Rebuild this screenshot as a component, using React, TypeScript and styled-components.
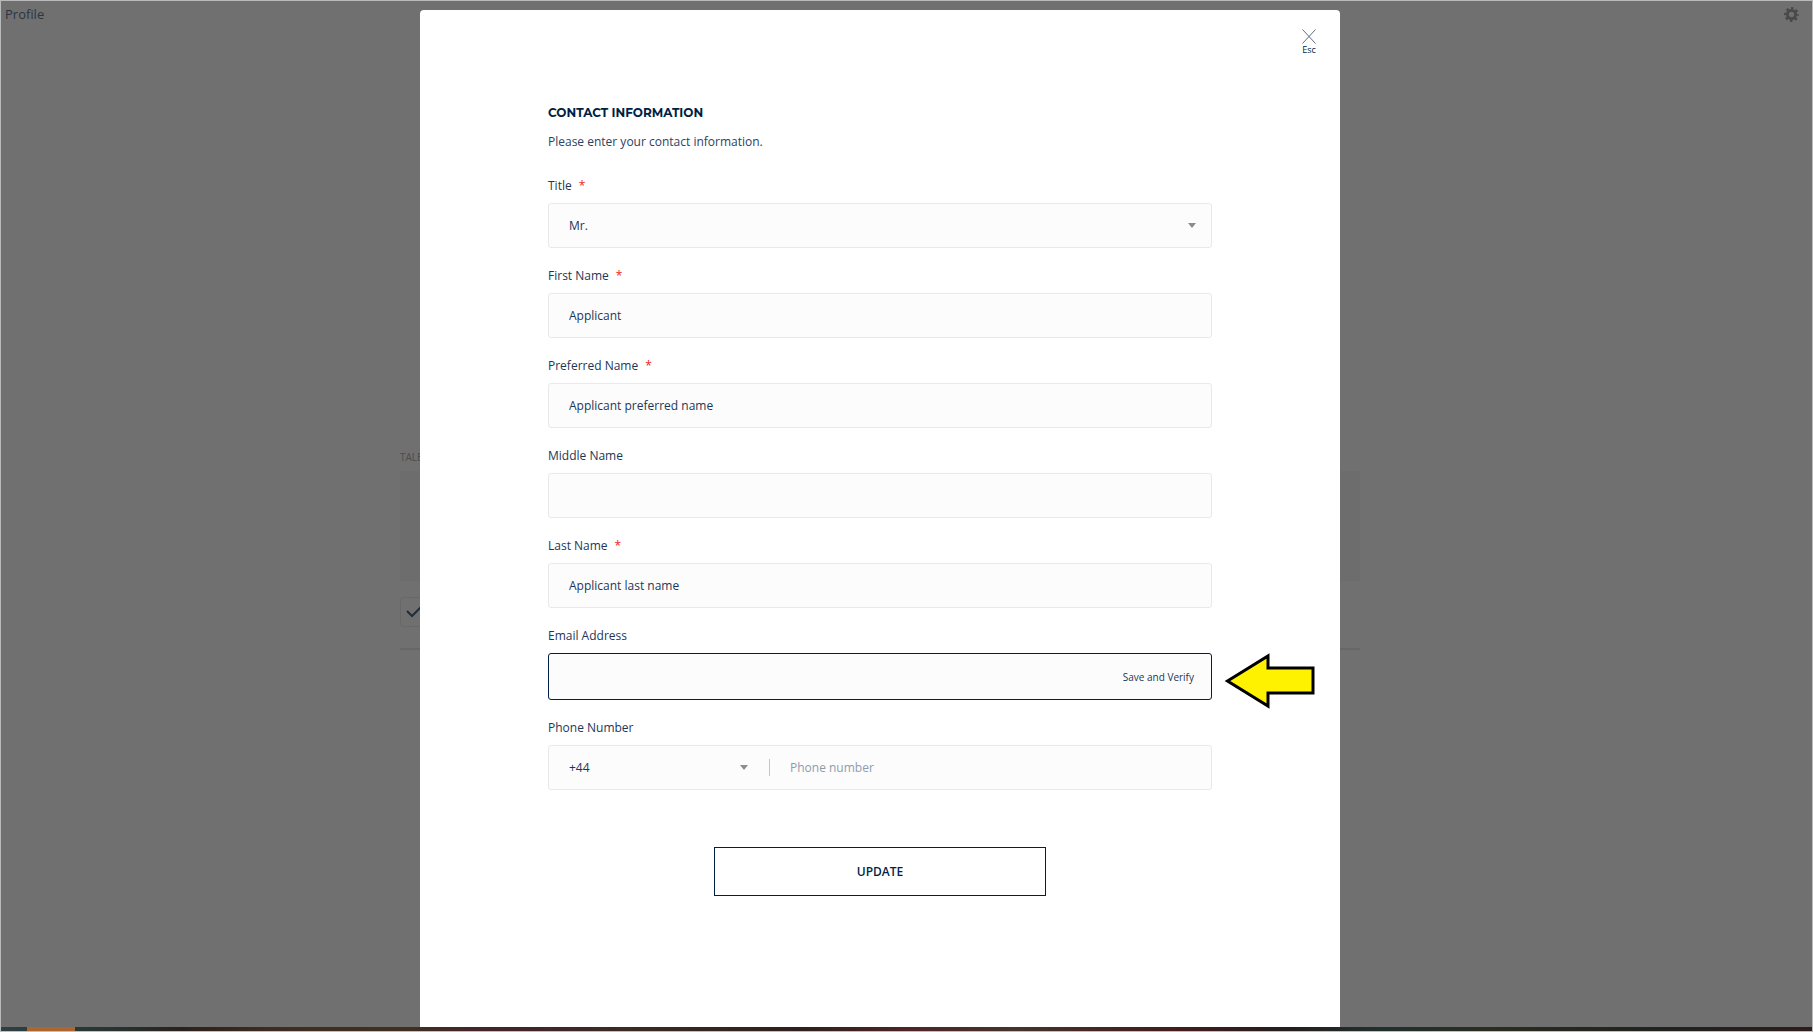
import React from "react";
import styled, { createGlobalStyle } from "styled-components";

const navy = "#001f47";

const GlobalStyle = createGlobalStyle`
  * { box-sizing: border-box; }
  body {
    margin: 0;
    background: #707070;
    color: ${navy};
    font-family: "Open Sans", "Noto Sans", sans-serif;
    font-size: 12px;
    line-height: 18px;
  }
  button, input, select { font: inherit; color: inherit; margin: 0; }
`;

const Frame = styled.div`
  position: relative;
  display: flex;
  flex-direction: column;
  min-height: 100vh;
  border: 1px solid #bababa;
  border-bottom-color: #c5bcbc;
`;

const Page = styled.div`
  flex: 1;
  display: flex;
  flex-direction: column;
`;

const TopBar = styled.header`
  display: flex;
  align-items: center;
  justify-content: space-between;
  height: 26px;
  padding: 0 13px 0 4px;
  color: #2b3442;
  font-size: 13px;
`;

const GearButton = styled.button`
  display: flex;
  padding: 0;
  border: 0;
  background: none;
  color: #494949;
`;

const Content = styled.main`
  width: 960px;
  max-width: 100%;
  margin: 0 auto;
  padding-top: 420px;
`;

const Backdrop = styled.div`
  flex: 1;
  padding-right: 53px;
`;

const Caption = styled.div`
  color: #4c4c4c;
  font-size: 10px;
  line-height: 20px;
`;

const Panel = styled.div`
  height: 110px;
  margin-top: 4px;
  background: #6d6d6d;
`;

const Tick = styled.div`
  display: flex;
  align-items: center;
  width: 30px;
  height: 30px;
  margin-top: 16px;
  padding-left: 5px;
  border: 1px solid #686868;
  border-radius: 3px;
  color: #222d3c;
`;

const Rule = styled.hr`
  height: 2px;
  margin: 21px 0 0;
  border: 0;
  background: #676767;
`;

const Strip = styled.div`
  height: 4px;
  background:
    linear-gradient(#ab672e, #ab672e) 26px 0 / 48px 4px no-repeat,
    linear-gradient(90deg, #2e4040 0%, #263533 6%, #2b211c 10%, #3f2c20 15%,
      #403020 22%, #43242a 27%, #3b2a24 35%, #2e201c 44%, #4e2428 50%,
      #45332c 56%, #431c1e 65%, #241e1d 71%, #20302f 76%, #2a2d20 82%,
      #20221e 92%, #2c1d1c 100%);
`;

const Overlay = styled.div`
  position: absolute;
  inset: 0 0 4px;
  display: flex;
  justify-content: center;
  padding: 9px 53px 0 0;
`;

const Modal = styled.section`
  display: flex;
  flex-direction: column;
  width: 920px;
  max-width: 100%;
  padding: 19px 24px 0;
  background: #fff;
  border-radius: 4px 4px 0 0;
`;

const Close = styled.button`
  display: flex;
  flex-direction: column;
  align-items: center;
  align-self: flex-end;
  padding: 0;
  border: 0;
  background: none;
  font-size: 9px;
  line-height: 12px;
`;

const Form = styled.form`
  display: flex;
  flex-direction: column;
  padding: 48px 104px 0;
`;

const Heading = styled.h1`
  margin: 0;
  font-family: Montserrat, Inter, sans-serif;
  font-size: 12px;
  font-weight: 700;
  line-height: 18px;
`;

const Intro = styled.p`
  margin: 11px 0 26px;
  color: #2b4262;
`;

const Field = styled.div`
  display: flex;
  flex-direction: column;
  gap: 8px;
  margin-bottom: 19px;
`;

const Label = styled.label`
  color: #1d3657;
`;

const Required = styled.span`
  margin-left: 7px;
  color: #ee1c1c;
`;

const Box = styled.div<{ $active?: boolean }>`
  position: relative;
  display: flex;
  align-items: center;
  height: ${(p) => (p.$active ? 47 : 45)}px;
  border: 1px solid ${(p) => (p.$active ? navy : "#e8e9eb")};
  border-radius: 3px;
  background: #fcfcfc;
`;

const Input = styled.input`
  flex: 1;
  min-width: 0;
  align-self: stretch;
  padding: 0 20px;
  border: 0;
  outline: 0;
  background: none;
  color: #1d3657;
  &::placeholder { color: #8f9bac; opacity: 1; }
`;

const SelectWrap = styled.div<{ $width?: string }>`
  display: flex;
  align-items: center;
  align-self: stretch;
  width: ${(p) => p.$width ?? "100%"};
  padding-right: ${(p) => (p.$width ? 21 : 15)}px;
`;

const Select = styled.select`
  flex: 1;
  align-self: stretch;
  min-width: 0;
  margin-right: -8px;
  padding: 0 20px;
  border: 0;
  outline: 0;
  appearance: none;
  background: none;
  color: #1d3657;
`;

const Caret = styled.span`
  border: 4px solid transparent;
  border-top: 5px solid #8a8d8d;
  border-bottom: 0;
  pointer-events: none;
`;

const Divider = styled.span`
  width: 1px;
  height: 17px;
  background: #c2c8d2;
`;

const Verify = styled.button`
  padding: 0 17px;
  border: 0;
  background: none;
  color: #1d3657;
  font-size: 10px;
`;

const Pointer = styled.svg`
  position: absolute;
  left: calc(100% + 13px);
  top: -2px;
`;

const Update = styled.button`
  align-self: center;
  width: 50%;
  height: 49px;
  margin-top: 38px;
  border: 1px solid ${navy};
  background: #fff;
  font-weight: 600;
`;

type TextFieldProps = { id: string; label: string; required?: boolean; value?: string };

function FieldLabel({ id, label, required }: TextFieldProps) {
  return (
    <Label htmlFor={id}>
      {label}
      {required && <Required>*</Required>}
    </Label>
  );
}

function TextField(props: TextFieldProps) {
  return (
    <Field>
      <FieldLabel {...props} />
      <Box>
        <Input id={props.id} defaultValue={props.value} />
      </Box>
    </Field>
  );
}

export default function App() {
  return (
    <>
      <GlobalStyle />
      <Frame>
        <Page>
          <TopBar>
            <span>Profile</span>
            <GearButton aria-label="Settings">
              <svg width="15" height="15" viewBox="0 0 16 16" fill="none" stroke="currentColor">
                <circle cx="8" cy="8" r="4.4" strokeWidth="3" />
                <circle cx="8" cy="8" r="6.8" strokeWidth="2.2" strokeDasharray="2.7 2.64" strokeDashoffset="1.35" />
              </svg>
            </GearButton>
          </TopBar>
          <Backdrop>
            <Content>
              <Caption>TALE</Caption>
              <Panel />
              <Tick>
                <svg width="18" height="14" viewBox="0 0 18 14" fill="none" stroke="currentColor" strokeWidth="2">
                  <path d="M1 6l5 5L16 1" />
                </svg>
              </Tick>
              <Rule />
            </Content>
          </Backdrop>
        </Page>
        <Strip />
        <Overlay>
          <Modal role="dialog" aria-labelledby="contact-heading">
            <Close>
              <svg width="14" height="15" viewBox="0 0 14 15" fill="none" stroke="#5d6f86">
                <path d="M.5.5l13 14M13.5.5l-13 14" />
              </svg>
              Esc
            </Close>
            <Form onSubmit={(e) => e.preventDefault()}>
              <Heading id="contact-heading">CONTACT INFORMATION</Heading>
              <Intro>Please enter your contact information.</Intro>
              <Field>
                <FieldLabel id="title" label="Title" required />
                <Box>
                  <SelectWrap>
                    <Select id="title"><option>Mr.</option></Select>
                    <Caret />
                  </SelectWrap>
                </Box>
              </Field>
              <TextField id="first" label="First Name" required value="Applicant" />
              <TextField id="preferred" label="Preferred Name" required value="Applicant preferred name" />
              <TextField id="middle" label="Middle Name" />
              <TextField id="last" label="Last Name" required value="Applicant last name" />
              <Field>
                <FieldLabel id="email" label="Email Address" />
                <Box $active>
                  <Input id="email" type="email" />
                  <Verify type="button">Save and Verify</Verify>
                  <Pointer width="92" height="58" viewBox="0 0 92 58">
                    <path d="M3.5 29L44 4V16H89V41H44V54Z" fill="#fff200" stroke="#000" strokeWidth="3" />
                  </Pointer>
                </Box>
              </Field>
              <Field>
                <FieldLabel id="phone" label="Phone Number" />
                <Box>
                  <SelectWrap $width="220px">
                    <Select aria-label="Country code"><option>+44</option></Select>
                    <Caret />
                  </SelectWrap>
                  <Divider />
                  <Input id="phone" type="tel" placeholder="Phone number" />
                </Box>
              </Field>
              <Update type="submit">UPDATE</Update>
            </Form>
          </Modal>
        </Overlay>
      </Frame>
    </>
  );
}
